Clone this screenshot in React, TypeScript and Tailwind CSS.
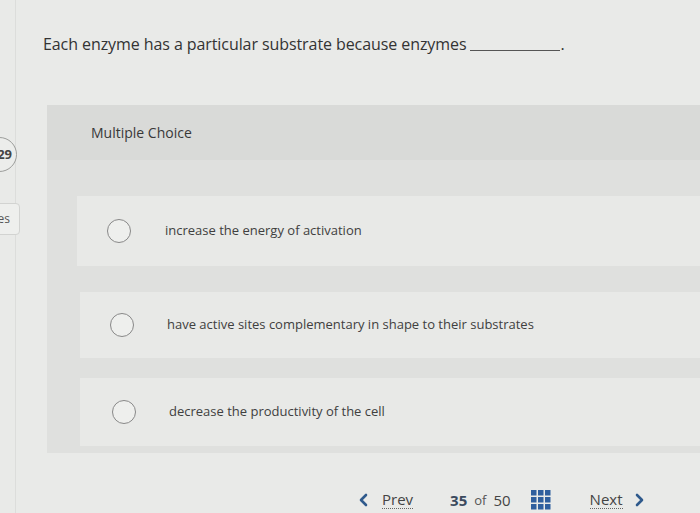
const font = { fontFamily: '"Open Sans", "Liberation Sans", sans-serif' };

const options = [
  { text: "increase the energy of activation", box: "ml-[30px] mt-[36px] h-[70px]", circle: "ml-[30px]", gap: "ml-[34px]" },
  { text: "have active sites complementary in shape to their substrates", box: "ml-[33px] mt-[26px] h-[66px]", circle: "ml-[30px]", gap: "ml-[33px]" },
  { text: "decrease the productivity of the cell", box: "ml-[33px] mt-[20px] h-[68px]", circle: "ml-[32px]", gap: "ml-[33px]" },
];

function GridIcon() {
  return (
    <svg width="20" height="20" viewBox="0 0 20 20">
      {[0, 7, 14].map((y) =>
        [0, 7, 14].map((x) => <rect key={`${x}-${y}`} x={x} y={y} width="5.5" height="5.5" fill="#2f5f9e" />)
      )}
    </svg>
  );
}

function Chevron({ dir }: { dir: "left" | "right" }) {
  return (
    <svg width="10" height="14" viewBox="0 0 10 14">
      <path
        d={dir === "left" ? "M8 2 L3 7 L8 12" : "M2 2 L7 7 L2 12"}
        fill="none"
        stroke="#2f5a8c"
        strokeWidth="2.6"
        strokeLinecap="round"
        strokeLinejoin="round"
      />
    </svg>
  );
}

export default function App() {
  return (
    <div className="w-[700px] h-[513px] overflow-hidden bg-[#e9eae8] flex text-[#3c3c3c]" style={font}>
      {/* Left rail */}
      <div className="w-[16px] shrink-0 border-r border-[#dcdddb] pt-[137px]">
        <div className="-ml-[18px] w-[35px] h-[35px] rounded-full border border-[#9c9d9b] bg-[#ecedeb] flex items-center justify-end pr-[4px] text-[13px] font-bold text-[#444]">
          29
        </div>
        <div className="mt-[31px] -ml-[10px] w-[30px] h-[32px] rounded-[4px] border border-[#d2d3d1] bg-[#eeefed] flex items-center justify-end pr-[9px] text-[12px] text-[#555]">
          es
        </div>
      </div>

      {/* Main */}
      <div className="flex-1 flex flex-col">
        <div className="pl-[27px] pt-[32px] h-[105px]">
          <p className="text-[16px] tracking-[-0.08px] text-[#333] flex items-end">
            Each enzyme has a particular substrate because enzymes
            <span className="inline-block w-[90px] border-b border-[#555] ml-[4px] mb-[5px]"></span>
            <span>.</span>
          </p>
        </div>

        {/* Question panel */}
        <div className="ml-[31px] h-[348px] bg-[#dfe0de] flex flex-col">
          <div className="h-[55px] bg-[#d9dad8] flex items-center pl-[44px] text-[14px] text-[#383838]">
            Multiple Choice
          </div>
          {options.map((o) => (
            <div key={o.text} className={`${o.box} bg-[#e8e9e7] flex items-center`}>
              <span className={`${o.circle} w-[24px] h-[24px] rounded-full border-[1.5px] border-[#888] bg-[#eeefed] shrink-0`}></span>
              <span className={`${o.gap} text-[13px] text-[#404040]`}>{o.text}</span>
            </div>
          ))}
        </div>

        {/* Footer nav */}
        <div className="mt-[36px] flex items-center pl-[342px] text-[15px]">
          <Chevron dir="left" />
          <span className="ml-[14px] text-[#444] border-b border-dotted border-[#666] leading-[17px]">Prev</span>
          <span className="ml-[37px] font-bold text-[#3b4a5e]">35</span>
          <span className="ml-[7px] text-[13px] text-[#555]">of</span>
          <span className="ml-[7px] text-[#444]">50</span>
          <span className="ml-[20px] flex"><GridIcon /></span>
          <span className="ml-[39px] text-[#444] border-b border-dotted border-[#666] leading-[17px]">Next</span>
          <span className="ml-[12px] flex"><Chevron dir="right" /></span>
        </div>
      </div>
    </div>
  );
}
